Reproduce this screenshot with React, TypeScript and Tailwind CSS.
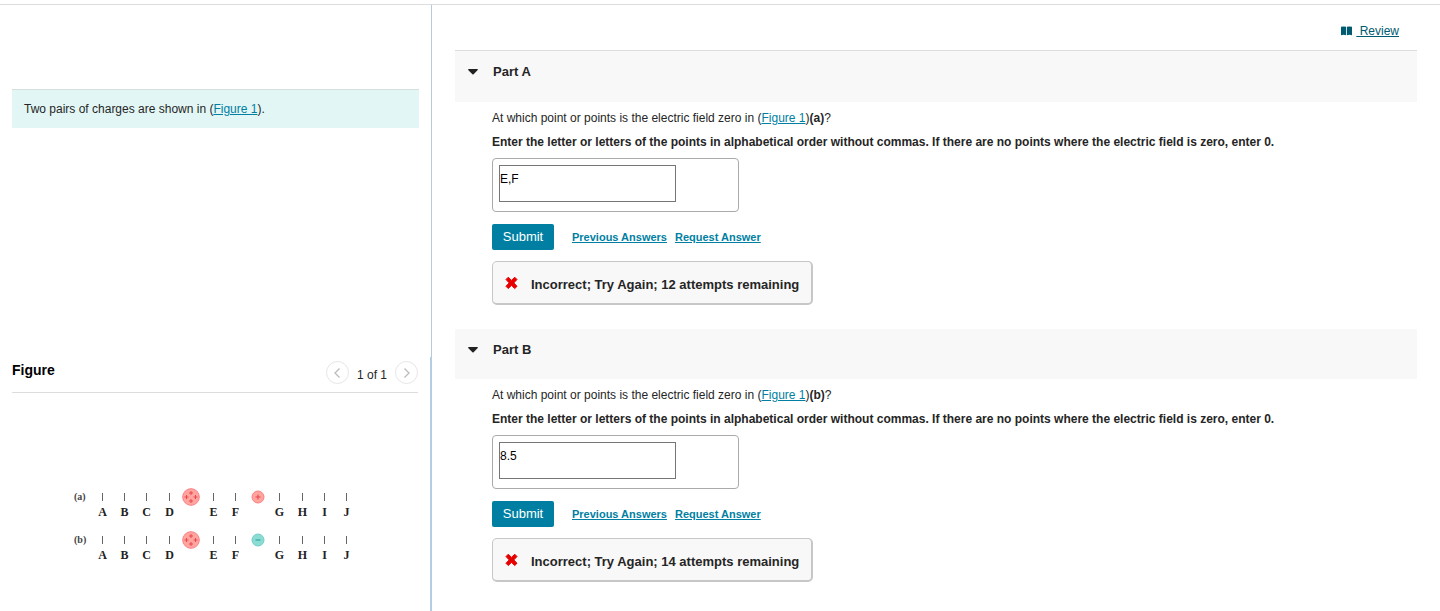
import React, { useState } from 'react';

type Part = {
    id: string;
    title: string;
    label: string;
    answer: string;
    attempts: number;
};

const PARTS: Part[] = [
    { id: 'part-a', title: 'Part A', label: '(a)', answer: 'E,F', attempts: 12 },
    { id: 'part-b', title: 'Part B', label: '(b)', answer: '8.5', attempts: 14 },
];

const POINTS = [
    { name: 'A', x: 32 },
    { name: 'B', x: 54 },
    { name: 'C', x: 76 },
    { name: 'D', x: 99 },
    { name: 'E', x: 143 },
    { name: 'F', x: 165 },
    { name: 'G', x: 209 },
    { name: 'H', x: 232 },
    { name: 'I', x: 254 },
    { name: 'J', x: 276 },
];

const FigureLink = () => (
    <a href="#figure" className="text-[#007fa3] underline">Figure 1</a>
);

const ChargeRow = ({ label, y, negative }: { label: string; y: number; negative?: boolean }) => (
    <g>
        <text x="4" y={y + 3} fontSize="10" fontWeight="bold" fill="#444">{label}</text>
        {POINTS.map((p) => (
            <g key={p.name}>
                <path d={`M${p.x + 0.5} ${y - 4}v8`} stroke="#666" strokeWidth="1" />
                <text x={p.x + 0.5} y={y + 19} fontSize="12" fontWeight="bold" textAnchor="middle" fill="#222">{p.name}</text>
            </g>
        ))}
        <circle cx="121" cy={y} r="8.3" fill="#ffa59e" stroke="#fb7f86" strokeWidth="1" />
        <path
            d={`M114.500 ${y}h4M116.500 ${y - 2}v4M123.500 ${y}h4M125.500 ${y - 2}v4M119 ${y - 4}h4M121 ${y - 6}v4M119 ${y + 4}h4M121 ${y + 2}v4`}
            stroke="#e8404f"
            strokeWidth="0.9"
        />
        <circle cx="188" cy={y} r="6" fill={negative ? '#8cdcd3' : '#ffa59e'} stroke={negative ? '#6ccfc7' : '#fb7f86'} strokeWidth="1" />
        <path
            d={negative ? `M185.500 ${y}h5` : `M185.500 ${y}h5M188 ${y - 2.5}v5`}
            stroke={negative ? '#1f9d96' : '#e8404f'}
            strokeWidth="1"
        />
    </g>
);

const ProblemPart = ({ part, first }: { part: Part; first: boolean }) => {
    const [answer, setAnswer] = useState(part.answer);

    return (
        <section className="mb-6">
            <div className={first ? 'border-t border-[#ddd] bg-[#f8f8f8] pb-px' : 'bg-[#f8f8f8]'}>
                <button type="button" className="flex h-[50px] w-full items-start pt-3 pl-[13px] text-left">
                    <svg width="10" height="6" viewBox="0 0 10 6" className="mt-1.5 mr-[15px] fill-[#222]">
                        <path d="M.5 0h9q.7.500 0 1.200L5.600 5.300q-.6.600-1.200 0L.4 1.200Q-.1.500.500 0z" />
                    </svg>
                    <span className="text-[13px] leading-[18px] font-bold text-[#252525]">{part.title}</span>
                </button>
            </div>
            <div className="pt-[7px] pl-[37px]">
                <p className="text-[12px] leading-[18px]">
                    At which point or points is the electric field zero in (<FigureLink />)<b>{part.label}</b>?
                </p>
                <label htmlFor={part.id} className="mt-1.5 block text-[12px] leading-[18px] font-bold">
                    Enter the letter or letters of the points in alphabetical order without commas. If there are no points where the electric field is zero, enter 0.
                </label>
                <div className="mt-[7px] h-[54px] w-[247px] rounded border border-[#aaa] p-1.5">
                    <input
                        id={part.id}
                        value={answer}
                        onChange={(e) => setAnswer(e.target.value)}
                        className="block h-[37px] w-[177px] border border-[#767676] pb-2.5 text-[12px] text-black"
                    />
                </div>
                <div className="mt-3 flex items-center text-[11px] font-bold text-[#007fa3]">
                    <button type="submit" className="mr-[18px] h-[26px] w-[62px] rounded-xs bg-[#007fa3] text-[13px] font-normal text-white">
                        Submit
                    </button>
                    <a href="#previous" className="mr-2 underline">Previous Answers</a>
                    <a href="#request" className="underline">Request Answer</a>
                </div>
                <div className="mt-[11px] inline-flex h-11 items-center rounded-[5px] border border-r-2 border-b-2 border-[#c7c7c7] bg-[#f8f8f8] px-3 align-top">
                    <svg width="14" height="14" viewBox="0 0 14 14" className="mr-3">
                        <path
                            d="M3.300 1.200 6.500 4.400 9.700 1.200 12 3.500 8.800 6.900 12 10.300 9.700 12.600 6.500 9.300 3.300 12.600 1 10.300 4.200 6.900 1 3.500z"
                            fill="#e60000"
                            stroke="#e60000"
                            strokeLinejoin="round"
                        />
                    </svg>
                    <span className="pt-1 text-[13px] leading-[18px] font-bold text-[#252525]">
                        Incorrect; Try Again; {part.attempts} attempts remaining
                    </span>
                </div>
            </div>
        </section>
    );
};

const App: React.FC = () => {
    return (
        <div className="flex min-h-screen flex-col bg-white pt-1 font-['Liberation_Sans',Arial,sans-serif] text-[#252525]">
            <div className="flex flex-1 border-t border-[#ddd]">
                <aside className="flex w-[30%] shrink-0 flex-col">
                    <div className="min-h-[352px] border-r border-[#b9c9dc] pt-[84px] pr-3 pl-3">
                        <div className="border-t border-[#d5e0da] bg-[#e2f6f5] px-3 py-2.5 text-[12px] leading-[18px]">
                            Two pairs of charges are shown in (<FigureLink />).
                        </div>
                    </div>
                    <div id="figure" className="flex-1 border-r-2 border-[#b6cce2] pr-3 pl-3">
                        <div className="flex h-9 items-center justify-between border-b border-[#ddd]">
                            <h2 className="pb-2 text-[14px] font-bold text-black">Figure</h2>
                            <div className="flex items-center pb-1">
                                <button type="button" aria-label="Previous figure" className="flex size-[23px] items-center justify-center rounded-full border border-[#e6e6e6]">
                                    <svg width="8" height="12" viewBox="0 0 8 12" fill="none" stroke="#bbb" strokeWidth="1.3">
                                        <path d="M6.500 1.500 2 6l4.500 4.500" />
                                    </svg>
                                </button>
                                <span className="px-2 pt-1 text-[12px] leading-4">1 of 1</span>
                                <button type="button" aria-label="Next figure" className="flex size-[23px] items-center justify-center rounded-full border border-[#e6e6e6]">
                                    <svg width="8" height="12" viewBox="0 0 8 12" fill="none" stroke="#bbb" strokeWidth="1.3">
                                        <path d="M1.500 1.500 6 6l-4.500 4.500" />
                                    </svg>
                                </button>
                            </div>
                        </div>
                        <svg width="290" height="80" viewBox="0 0 290 80" className="mt-[92px] ml-[58px] font-['Liberation_Serif','Times_New_Roman',serif]">
                            <ChargeRow label="(a)" y={12} />
                            <ChargeRow label="(b)" y={55} negative />
                        </svg>
                    </div>
                </aside>
                <main className="min-w-0 flex-1 px-[23px]">
                    <div className="flex h-[45px] items-center justify-end pt-1.5 pr-[18px]">
                        <svg width="11" height="10" viewBox="0 0 11 10" className="mr-1 fill-[#005a70]">
                            <path d="M0 .8Q2.800 0 5.100.8v8.400Q2.600 8.500 0 9.200zM5.900.8Q8.200 0 11 .8v8.400Q8.400 8.500 5.900 9.200z" />
                        </svg>
                        <a href="#review" className="text-[12px] leading-4 whitespace-pre text-[#005a70] underline"> Review</a>
                    </div>
                    {PARTS.map((part, i) => (
                        <ProblemPart key={part.id} part={part} first={i === 0} />
                    ))}
                </main>
            </div>
        </div>
    );
};

export default App;
